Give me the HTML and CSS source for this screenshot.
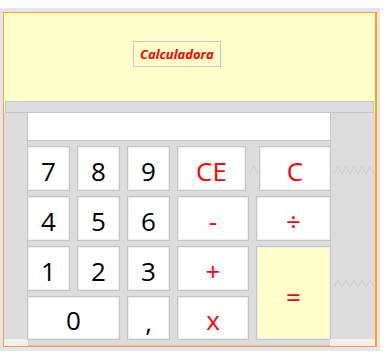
FILE: index.html
```html
<!DOCTYPE html>
<html lang="es">
<head>
  <meta charset="UTF-8" />
  <title>Calculadora</title>
  <link rel="stylesheet" href="styles.css">
</head>
<body>
  <div class="screen">
    <div class="calc">
      <div class="title-pane">
        <span class="title">Calculadora</span>
      </div>
      <div class="splitter"></div>
      <div class="main">
        <div class="side side-left">
          <div class="side-fill"></div>
          <div class="side-foot"></div>
        </div>
        <div class="keys">
          <div class="display"></div>
          <div class="row-top">
            <button class="key">7</button>
            <button class="key">8</button>
            <button class="key">9</button>
            <button class="key op">CE</button>
            <button class="key op key-c">C</button>
            <svg class="grip-mini" width="10" height="9" viewBox="0 0 10 9"><polyline points="1,8 5,1 9,8" /></svg>
          </div>
          <div class="row-low">
            <button class="key">4</button>
            <button class="key">5</button>
            <button class="key">6</button>
            <button class="key op">-</button>
            <button class="key op">÷</button>
            <button class="key">1</button>
            <button class="key">2</button>
            <button class="key">3</button>
            <button class="key op">+</button>
            <button class="key op key-eq">=</button>
            <button class="key key-zero">0</button>
            <button class="key key-comma">,</button>
            <button class="key op">x</button>
          </div>
        </div>
        <div class="side side-right">
          <div class="side-fill grips">
            <svg class="grip" width="42" height="9" viewBox="0 0 42 9"><polyline points="0,8 4,1 8,8 12,1 16,8 20,1 24,8 28,1 32,8 36,1 40,8" /></svg>
            <svg class="grip grip-low" width="42" height="9" viewBox="0 0 42 9"><polyline points="0,8 4,1 8,8 12,1 16,8 20,1 24,8 28,1 32,8 36,1 40,8" /></svg>
          </div>
          <div class="side-foot"></div>
        </div>
      </div>
    </div>
  </div>
</body>
</html>
```

FILE: styles.css
```css
/* base */
* { box-sizing: border-box; margin: 0; padding: 0; }
body { background: #fff; font-family: "Open Sans", "DejaVu Sans", sans-serif; }

/* outer frame */
.screen {
  width: 380px;
  margin-top: 8px;
  padding: 4px 3px 4px 3px;
  background: #e3e3fc;
}
.calc {
  border: 1px solid #ffa500;
  border-right-width: 2px;
  background: #ffffcc;
}

/* title */
.title-pane { height: 88px; padding: 28px 0 0 129px; }
.title {
  display: inline-block;
  height: 26px;
  padding: 3px 6px 0 6px;
  border: 1px solid #c8c8c8;
  color: #ff0000;
  font-size: 13px;
  font-weight: 700;
  font-style: italic;
}
.splitter {
  height: 12px;
  margin: 0 1px;
  background: #dcdcdc;
  border: 1px solid #c4c4c4;
}

/* body */
.main {
  display: grid;
  grid-template-columns: 24px 302px 45px;
  background: #dcdcdc;
}
.side { display: flex; flex-direction: column; }
.side-fill { flex: 1; background: #dcdcdc; }
.side-left .side-fill { border-right: 1px solid #c4c4c4; }
.side-right .side-fill { border-left: 1px solid #c4c4c4; }
.side-foot { height: 7px; background: #f0f0f0; }
.grips { display: flex; flex-direction: column; padding: 53px 0 0 3px; }
.grip polyline, .grip-mini polyline { fill: none; stroke: #cbcbcb; stroke-width: 1; }
.grip-low { margin-top: 104px; }

.keys {
  display: flex;
  flex-direction: column;
  gap: 7px;
  padding-bottom: 6px;
  border-bottom: 1px solid #c4c4c4;
}
.display {
  height: 27px;
  background: #fff;
  box-shadow: 0 1px 0 #c4c4c4;
}
.row-top {
  position: relative;
  display: grid;
  grid-template-columns: 41px 41px 41px 67px 1fr;
  column-gap: 9px;
  height: 43px;
}
.grip-mini { position: absolute; left: 221px; top: 18px; }
.row-low {
  display: grid;
  grid-template-columns: 41px 41px 41px 70px 73px;
  grid-template-rows: 43px 43px 42px;
  gap: 7px 9px;
}

/* keys */
.key {
  background: #fff;
  border: 1px solid #eeeeee;
  box-shadow: 0 0 0 1px #c4c4c4;
  font-family: "Open Sans", "DejaVu Sans", sans-serif;
  font-size: 26px;
  color: #000;
  padding-top: 4px;
  line-height: 1;
}
.key.op { color: #ff0000; }
.key-c { margin-left: 6px; }
.key-eq { grid-row: span 2; background: #ffffcc; padding-top: 8px; }
.key-zero { grid-column: span 2; }
.key-comma { padding-top: 8px; }
```
